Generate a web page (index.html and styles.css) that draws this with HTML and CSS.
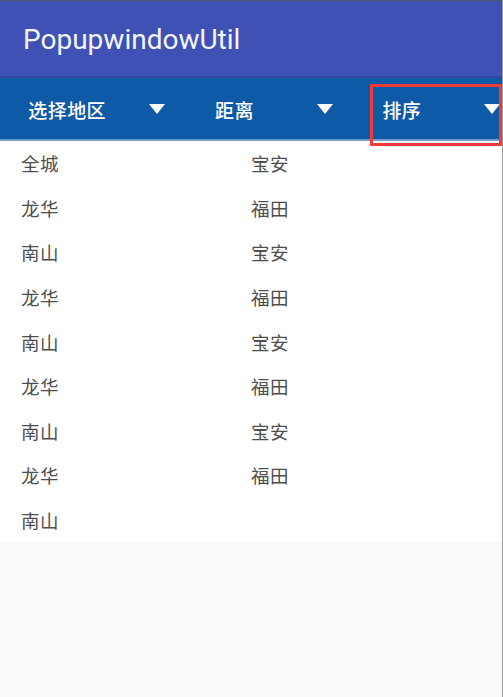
FILE: index.html
```html
<!DOCTYPE html>
<html lang="zh-CN">
<head>
<meta charset="utf-8">
<title>PopupwindowUtil</title>
<link rel="stylesheet" href="styles.css">
</head>
<body>
<div class="page">
  <header class="appbar">
    <h1 class="title">PopupwindowUtil</h1>
  </header>
  <nav class="tabs">
    <div class="tab"><span class="tab-label">选择地区</span><span class="tab-arrow"></span></div>
    <div class="tab"><span class="tab-label">距离</span><span class="tab-arrow"></span></div>
    <div class="tab"><span class="tab-label">排序</span><span class="tab-arrow"></span></div>
    <div class="highlight"></div>
  </nav>
  <ul class="list">
    <li>全城</li><li>宝安</li>
    <li>龙华</li><li>福田</li>
    <li>南山</li><li>宝安</li>
    <li>龙华</li><li>福田</li>
    <li>南山</li><li>宝安</li>
    <li>龙华</li><li>福田</li>
    <li>南山</li><li>宝安</li>
    <li>龙华</li><li>福田</li>
    <li>南山</li>
  </ul>
</div>
</body>
</html>
```

FILE: styles.css
```css
html, body {
  margin: 0;
  padding: 0;
  background: #fafafa;
}

.page {
  width: 502px;
  height: 697px;
  border-right: 1px solid #9a9a9a;
  background: #fafafa;
  font-family: "Noto Sans CJK SC", "Noto Sans", sans-serif;
  display: flex;
  flex-direction: column;
}

.appbar {
  height: 75px;
  border-top: 1px solid #50546e;
  background: #3f51b5;
  display: flex;
  align-items: center;
  padding-left: 23px;
  box-sizing: content-box;
  border-bottom: 2px solid #33449e;
}

.title {
  margin: 0;
  font-family: Roboto, "Noto Sans", sans-serif;
  font-weight: 400;
  font-size: 28px;
  color: #f4f5fb;
  letter-spacing: 0;
  margin-top: 1px;
}

.tabs {
  position: relative;
  height: 61px;
  background: #0f5aa7;
  border-bottom: 2px solid #6f9ec6;
  display: grid;
  grid-template-columns: repeat(3, 1fr);
}

.tab {
  display: grid;
  grid-template-columns: 1fr 33px;
  align-items: center;
  padding-top: 2px;
}

.tab-label {
  text-align: center;
  color: #ffffff;
  font-size: 19px;
  font-weight: 500;
  letter-spacing: 0.4px;
}

.tab-arrow {
  justify-self: end;
  margin-right: 2px;
  width: 0;
  height: 0;
  border-left: 8px solid transparent;
  border-right: 8px solid transparent;
  border-top: 10px solid #ffffff;
  margin-top: -1px;
}

.highlight {
  position: absolute;
  left: 370px;
  top: 6px;
  width: 126px;
  height: 56px;
  border: 3px solid #f03b3b;
}

.list {
  list-style: none;
  margin: 0;
  padding: 0 0 0 21px;
  background: #ffffff;
  display: grid;
  grid-template-columns: 230px 1fr;
  grid-auto-rows: 44.6px;
}

.list li {
  display: flex;
  align-items: center;
  font-size: 18.5px;
  color: #4f4f4f;
  letter-spacing: 0.6px;
}
```
